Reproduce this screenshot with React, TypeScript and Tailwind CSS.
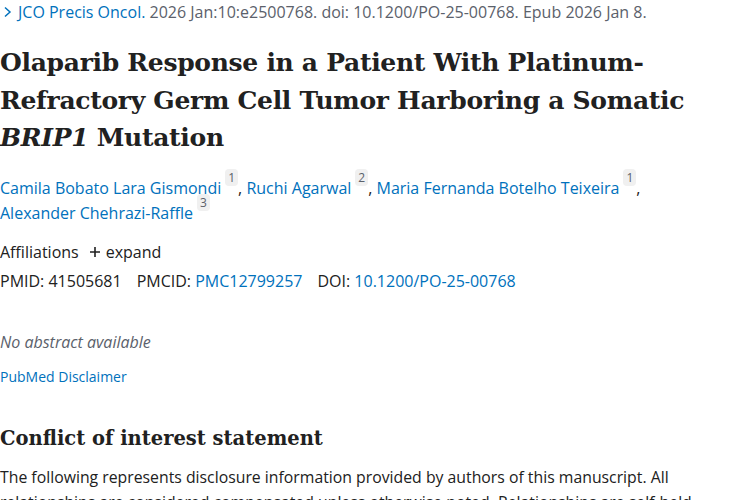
const sans = "font-['Open_Sans','Noto_Sans',sans-serif]"
const serif = "font-['DejaVu_Serif','Liberation_Serif',serif]"

function Sup({ n }: { n: number }) {
  return (
    <sup className="ml-[4px] px-[3px] bg-[#f0f0f0] text-[#5b616b] text-[12px] rounded-sm align-[6px]">
      {n}
    </sup>
  )
}

function Author({ name, n, last }: { name: string; n: number; last?: boolean }) {
  return (
    <span>
      <a className="text-[#0071bc]">{name}</a>
      <Sup n={n} />
      {!last && <span className="text-[#212121]">, </span>}
    </span>
  )
}

export default function App() {
  return (
    <div className={`w-[750px] h-[500px] overflow-hidden bg-white text-[#212121] ${sans}`}>
      <div className="text-[16px] leading-[20px] text-[#5b616b] pt-[2px] flex items-center">
        <svg width="9" height="12" viewBox="0 0 9 12" className="ml-[3px] mr-[6px]" fill="none">
          <path d="M2 1.5 L7 6 L2 10.5" stroke="#0071bc" strokeWidth="1.5" />
        </svg>
        <span>
          <a className="text-[#0071bc]">JCO Precis Oncol.</a> 2026 Jan:10:e2500768. doi: 10.1200/PO-25-00768. Epub 2026 Jan 8.
        </span>
      </div>

      <h1 className={`${serif} font-bold text-[25px] leading-[37.5px] mt-[22px] tracking-[-0.3px] text-[#212121]`}>
        Olaparib Response in a Patient With Platinum-
        <br />
        Refractory Germ Cell Tumor Harboring a Somatic
        <br />
        <em>BRIP1</em> Mutation
      </h1>

      <div className="mt-[19px] text-[16px] leading-[25px]">
        <Author name="Camila Bobato Lara Gismondi" n={1} />
        <Author name="Ruchi Agarwal" n={2} />
        <Author name="Maria Fernanda Botelho Teixeira" n={1} />
        <br />
        <Author name="Alexander Chehrazi-Raffle" n={3} last />
      </div>

      <div className="mt-[14px] text-[16px] leading-[25px] flex items-center">
        <span>Affiliations</span>
        <span className="ml-[10px] flex items-center gap-[5px]">
          <svg width="12" height="12" viewBox="0 0 12 12">
            <path d="M6 1 V11 M1 6 H11" stroke="#212121" strokeWidth="1.6" />
          </svg>
          <span>expand</span>
        </span>
      </div>

      <div className="mt-[4px] text-[16px] leading-[25px] flex gap-[15px]">
        <span>PMID: 41505681</span>
        <span>
          PMCID: <a className="text-[#0071bc]">PMC12799257</a>
        </span>
        <span>
          DOI: <a className="text-[#0071bc]">10.1200/PO-25-00768</a>
        </span>
      </div>

      <div className="mt-[36px] text-[16px] leading-[25px] italic text-[#5b616b]">No abstract available</div>

      <div className="mt-[12px] text-[14px] leading-[20px] text-[#0071bc]">PubMed Disclaimer</div>

      <h2 className={`${serif} font-bold text-[19.5px] leading-[30px] mt-[37px] text-[#212121]`}>
        Conflict of interest statement
      </h2>

      <p className="mt-[11px] text-[15.8px] leading-[25px] w-[700px]">
        The following represents disclosure information provided by authors of this manuscript. All
        relationships are considered compensated unless otherwise noted. Relationships are self-held unless
        noted.
      </p>
    </div>
  )
}
